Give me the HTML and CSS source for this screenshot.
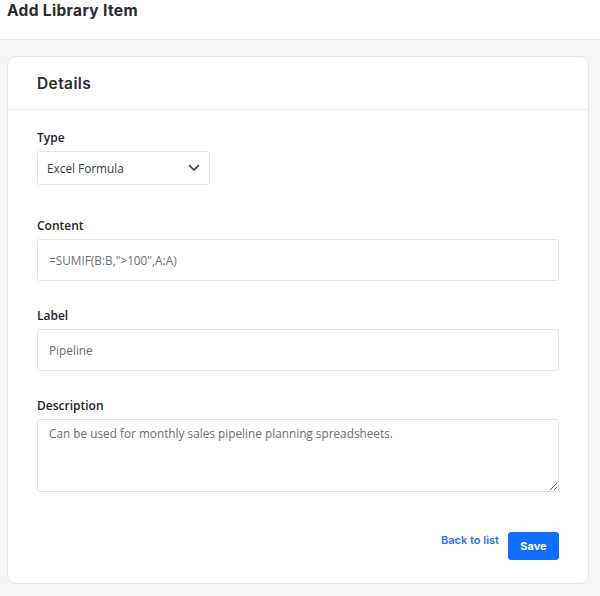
FILE: index.html
```html
<!DOCTYPE html>
<html lang="en">
<head>
<meta charset="utf-8">
<title>Add Library Item</title>
<link rel="stylesheet" href="styles.css">
</head>
<body>
<header class="topbar">
  <h1 class="page-title">Add Library Item</h1>
</header>
<main class="main">
  <section class="card">
    <div class="card-header">
      <h2 class="card-title">Details</h2>
    </div>
    <form class="card-body">
      <div class="field field-select">
        <label class="label">Type</label>
        <div class="select">
          <span class="select-value">Excel Formula</span>
          <svg class="chevron" width="12" height="8" viewBox="0 0 12 8"><path d="M1.5 1.5 L6 6 L10.5 1.5" fill="none" stroke="#333" stroke-width="1.6" stroke-linecap="round" stroke-linejoin="round"/></svg>
        </div>
      </div>
      <div class="field">
        <label class="label">Content</label>
        <input class="input" type="text" value="=SUMIF(B:B,&quot;&gt;100&quot;,A:A)">
      </div>
      <div class="field">
        <label class="label">Label</label>
        <input class="input" type="text" value="Pipeline">
      </div>
      <div class="field">
        <label class="label">Description</label>
        <textarea class="textarea">Can be used for monthly sales pipeline planning spreadsheets.</textarea>
      </div>
      <div class="actions">
        <a class="back-link" href="#">Back to list</a>
        <button class="btn-save" type="button">Save</button>
      </div>
    </form>
  </section>
</main>
</body>
</html>
```
FILE: styles.css
```css
html, body {
  margin: 0;
  padding: 0;
  background: #f5f6f8;
  font-family: "Open Sans", "Noto Sans", sans-serif;
}
.topbar {
  background: #ffffff;
  height: 40px;
  border-bottom: 1px solid #e8eaed;
  box-sizing: border-box;
}
.page-title {
  margin: 0;
  padding: 1px 0 0 7px;
  font-family: "Inter", "Lato", sans-serif;
  font-weight: 700;
  font-size: 15.5px;
  line-height: 20px;
  color: #2a2b31;
  letter-spacing: 0.35px;
}
.main {
  padding: 16px 11px 12px 7px;
}
.card {
  background: #ffffff;
  border: 1px solid #e3e5e8;
  border-radius: 9px;
}
.card-header {
  height: 52px;
  border-bottom: 1px solid #ebedf0;
  display: flex;
  align-items: center;
  padding-left: 29px;
}
.card-title {
  margin: 0;
  font-family: "Inter", "Lato", sans-serif;
  font-weight: 600;
  font-size: 15.5px;
  letter-spacing: 0.4px;
  color: #2a2b31;
  padding-top: 1px;
}
.card-body {
  padding: 19px 29px 23px 29px;
  display: flex;
  flex-direction: column;
  margin: 0;
}
.field {
  display: flex;
  flex-direction: column;
  margin-bottom: 26px;
}
.field-select {
  margin-bottom: 32px;
}
.label {
  font-size: 12px;
  font-weight: 600;
  line-height: 18px;
  color: #222429;
  margin-bottom: 4px;
}
.select {
  width: 173px;
  height: 34px;
  box-sizing: border-box;
  border: 1px solid #e2e4e7;
  border-radius: 3px;
  display: flex;
  align-items: center;
  justify-content: space-between;
  padding: 0 9px 0 9px;
  font-size: 11.8px;
  color: #3a3c40;
}
.chevron {
  display: block;
}
.input {
  height: 42px;
  box-sizing: border-box;
  border: 1px solid #e2e4e7;
  border-radius: 3px;
  padding: 0 11px;
  font-family: "Open Sans", "Noto Sans", sans-serif;
  font-size: 11.8px;
  color: #6b6e73;
  outline: none;
  background: #fff;
}
.textarea {
  height: 73px;
  box-sizing: border-box;
  border: 1px solid #e2e4e7;
  border-radius: 3px;
  padding: 4px 11px;
  font-family: "Open Sans", "Noto Sans", sans-serif;
  font-size: 11.8px;
  line-height: 18px;
  color: #6b6e73;
  outline: none;
  resize: vertical;
  background: #fff;
}
.actions {
  display: flex;
  justify-content: flex-end;
  align-items: center;
  gap: 9px;
  margin-top: 14px;
}
.back-link {
  font-family: "Inter", "Lato", sans-serif;
  font-weight: 600;
  font-size: 11px;
  color: #2b72f0;
  text-decoration: none;
  position: relative;
  top: -6px;
}
.btn-save {
  width: 51px;
  height: 28px;
  background: #0f6efd;
  color: #fff;
  border: none;
  border-radius: 3px;
  font-family: "Inter", "Lato", sans-serif;
  font-weight: 700;
  font-size: 11px;
  padding: 0;
}
```
